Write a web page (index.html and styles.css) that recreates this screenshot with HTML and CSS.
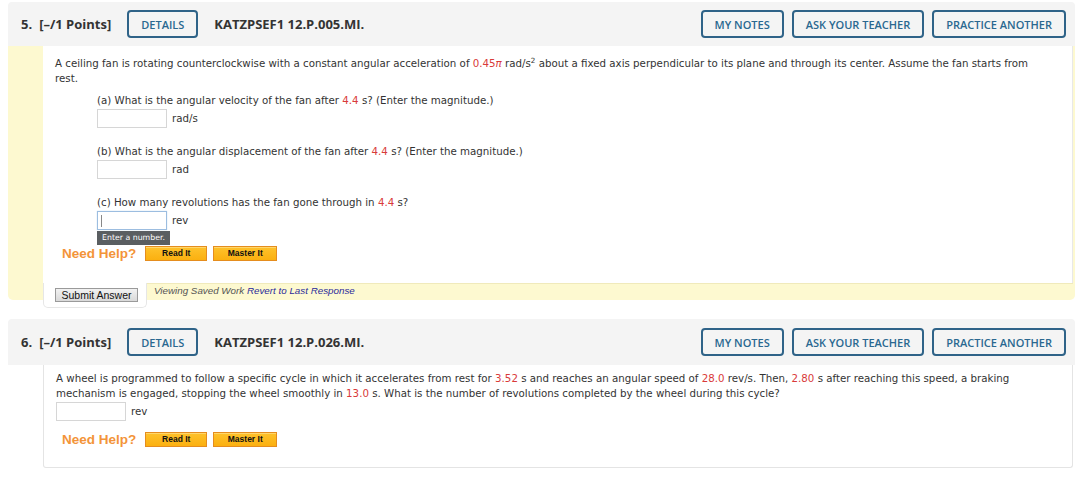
FILE: index.html
```html
<!DOCTYPE html>
<html lang="en">
<head>
  <meta charset="UTF-8" />
  <title>WebAssign Questions</title>
  <link rel="stylesheet" href="styles.css">
</head>
<body>
  <main>
    <!-- question 5 -->
    <section class="question">
      <div class="q-header">
        <span class="q-points"><span class="q-num">5.</span>[–/1 Points]</span>
        <button class="hbtn">DETAILS</button>
        <span class="q-code">KATZPSEF1 12.P.005.MI.</span>
        <div class="hright">
          <button class="hbtn">MY NOTES</button>
          <button class="hbtn">ASK YOUR TEACHER</button>
          <button class="hbtn">PRACTICE ANOTHER</button>
        </div>
      </div>

      <div class="q-body saved">
        <div class="q-content">
          <p class="stem">A ceiling fan is rotating counterclockwise with a constant angular acceleration of <span class="num">0.45<i>π</i></span> rad/s<sup>2</sup> about a fixed axis perpendicular to its plane and through its center. Assume the fan starts from rest.</p>

          <div class="part">
            <p>(a) What is the angular velocity of the fan after <span class="num">4.4</span> s? (Enter the magnitude.)</p>
            <div class="answer"><span class="input"></span>rad/s</div>
          </div>

          <div class="part">
            <p>(b) What is the angular displacement of the fan after <span class="num">4.4</span> s? (Enter the magnitude.)</p>
            <div class="answer"><span class="input"></span>rad</div>
          </div>

          <div class="part">
            <p>(c) How many revolutions has the fan gone through in <span class="num">4.4</span> s?</p>
            <div class="answer">
              <span class="input active"><span class="caret"></span><span class="tip">Enter a number.</span></span>rev
            </div>
          </div>

          <div class="help">
            <span class="need-help">Need Help?</span>
            <button class="help-btn">Read It</button>
            <button class="help-btn wide">Master It</button>
          </div>
        </div>

        <div class="q-foot">
          <div class="submit-tab"><button class="submit">Submit Answer</button></div>
          <div class="saved-note">Viewing Saved Work <a href="#">Revert to Last Response</a></div>
        </div>
      </div>
    </section>

    <!-- question 6 -->
    <section class="question second">
      <div class="q-header">
        <span class="q-points"><span class="q-num">6.</span>[–/1 Points]</span>
        <button class="hbtn">DETAILS</button>
        <span class="q-code">KATZPSEF1 12.P.026.MI.</span>
        <div class="hright">
          <button class="hbtn">MY NOTES</button>
          <button class="hbtn">ASK YOUR TEACHER</button>
          <button class="hbtn">PRACTICE ANOTHER</button>
        </div>
      </div>

      <div class="q-body">
        <div class="q-content plain">
          <p class="stem">A wheel is programmed to follow a specific cycle in which it accelerates from rest for <span class="num">3.52</span> s and reaches an angular speed of <span class="num">28.0</span> rev/s. Then, <span class="num">2.80</span> s after reaching this speed, a braking mechanism is engaged, stopping the wheel smoothly in <span class="num">13.0</span> s. What is the number of revolutions completed by the wheel during this cycle?</p>
          <div class="answer"><span class="input"></span>rev</div>

          <div class="help">
            <span class="need-help">Need Help?</span>
            <button class="help-btn">Read It</button>
            <button class="help-btn wide">Master It</button>
          </div>
        </div>
      </div>
    </section>
  </main>
</body>
</html>
```

FILE: styles.css
```css
html, body {
  margin: 0;
  background-color: #fff;
  font-family: "DejaVu Sans", Verdana, sans-serif;
  color: #333;
}

p {
  margin: 0;
}

.question {
  margin: 2px 6px 0 8px;
}

.question.second {
  margin-top: 19px; /* gap below the saved-work band */
}

/* Header band */
.q-header {
  display: flex;
  align-items: center;
  gap: 16px;
  height: 44px;
  padding: 0 9px 0 13px;
  background-color: #f4f4f4;
  border-radius: 4px 4px 0 0;
  font-family: "Open Sans", sans-serif;
  font-weight: 700;
  font-size: 13px;
  color: #333;
}

.second .q-header {
  height: 46px;
}

.q-num {
  margin-right: 7px;
}

.hright {
  margin-left: auto;
  display: flex;
  gap: 8px;
}

.hbtn {
  height: 28px;
  padding: 0 12px;
  border: 2px solid #2f6388;
  border-radius: 4px;
  background-color: transparent;
  color: #2a6890;
  font-family: "Open Sans", sans-serif;
  font-weight: 600;
  font-size: 11px;
  cursor: pointer;
}

/* Body */
.q-body {
  padding-left: 35px;
  padding-right: 2px;
}

.q-body.saved {
  background-color: #fdf9d0;
  border-radius: 0 0 5px 5px;
}

.q-content {
  background-color: #fff;
  padding: 10px 28px 22px 12px;
  border-right: 1px solid #e8e8e8;
  font-size: 10.25px;
  line-height: 15px;
}

.q-content.plain {
  padding-top: 6px;
  padding-bottom: 20px;
  border: 1px solid #e4e4e4;
  border-top: none;
  border-radius: 0 0 3px 3px;
}

.num {
  color: #d93a3a;
}

sup {
  font-size: 70%;
  line-height: 0;
}

.part {
  margin-left: 42px;
  margin-top: 14px;
}

.part p {
  padding-top: 2px;
}

.stem + .part {
  margin-top: 5px;
}

.answer {
  display: flex;
  align-items: center;
  gap: 5px;
  height: 20px;
}

.input {
  position: relative;
  width: 70px;
  height: 19px;
  box-sizing: border-box;
  border: 1px solid #d6d6d6;
  background-color: #fff;
}

.input.active {
  border-color: #9cbde0;
  box-shadow: 0 0 1px #b9d3ee;
}

.caret {
  position: absolute;
  left: 3px;
  top: 3px;
  width: 1px;
  height: 12px;
  background-color: #888;
}

/* validation tooltip floating under the field */
.tip {
  position: absolute;
  left: -1px;
  top: 19px;
  width: 73px;
  height: 14px;
  background-color: #5a5e61;
  color: #fff;
  font-family: "DejaVu Sans", Verdana, sans-serif;
  font-size: 7.8px;
  line-height: 14px;
  text-align: center;
  white-space: nowrap;
}

/* Need help row */
.help {
  display: flex;
  align-items: center;
  height: 16px;
  margin-top: 15px;
  margin-left: 7px;
}

.plain .help {
  margin-top: 10px;
  margin-left: 6px;
}

.need-help {
  color: #f39439;
  font-family: "Liberation Sans", Arial, sans-serif;
  font-weight: 700;
  font-size: 13.5px;
  margin-right: 9px;
}

.help-btn {
  width: 62px;
  height: 15px;
  margin-right: 6px;
  padding: 0;
  border: 1px solid #e58d1e;
  box-shadow: inset 0 1px 0 #ffd66a;
  background: linear-gradient(#fec22c, #fbb010);
  color: #111;
  font-family: "Liberation Sans", Arial, sans-serif;
  font-weight: 700;
  font-size: 8.5px;
  cursor: pointer;
}

.help-btn.wide {
  width: 64px;
}

/* Footer with submit tab */
.q-foot {
  display: flex;
  align-items: flex-start;
  height: 16px;
  border-top: 1px solid #f0eabb;
}

.submit-tab {
  width: 104px;
  height: 25px;
  box-sizing: border-box;
  margin-top: -1px;
  padding: 5px 0 0 11px;
  background-color: #fff;
  border: 1px solid #e6e6e6;
  border-top: none;
  border-radius: 0 0 5px 5px;
}

.submit {
  display: block;
  width: 83px;
  height: 14px;
  padding: 0;
  border: 1px solid #9a9a9a;
  background: linear-gradient(#f2f2f2, #d9d9d9);
  color: #111;
  font-family: "Liberation Sans", Arial, sans-serif;
  font-size: 10.5px;
  line-height: 12px;
}

.saved-note {
  padding: 1px 0 0 7px;
  font-family: "Liberation Sans", Arial, sans-serif;
  font-style: italic;
  font-size: 9.8px;
  color: #555;
}

.saved-note a {
  color: #2b2b9a;
  text-decoration: none;
}
```
